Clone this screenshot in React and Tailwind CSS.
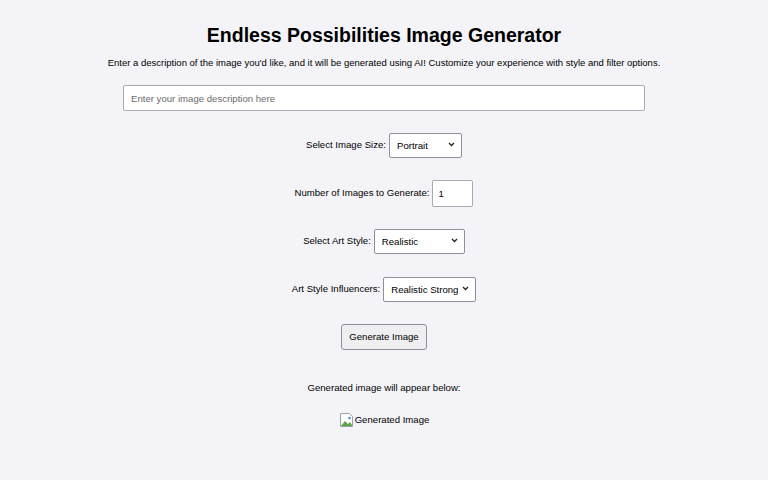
import { useState } from "react";

function Field({ label, children }) {
  return (
    <div className="flex items-center justify-center gap-[3px] h-[48px]">
      <label className="text-[9.6px] text-black">{label}</label>
      {children}
    </div>
  );
}

function Select({ value, onChange, width, options }) {
  return (
    <div className={`relative ${width}`}>
      <select
        value={value}
        onChange={onChange}
        className="appearance-none w-full h-[25px] bg-white border border-[#8f8f9d] rounded-[2px] pl-[7px] pr-[16px] text-[9.6px] outline-none"
      >
        {options.map((o) => (
          <option key={o.value} value={o.value}>
            {o.label}
          </option>
        ))}
      </select>
      <svg
        width="7"
        height="5"
        viewBox="0 0 7 5"
        className="absolute right-[7px] top-[10px] pointer-events-none"
      >
        <path d="M1 1l2.5 2.5L6 1" fill="none" stroke="#222" strokeWidth="1.3" />
      </svg>
    </div>
  );
}

function BrokenImageIcon() {
  return (
    <svg width="16" height="16" viewBox="0 0 16 16" className="inline-block">
      <path d="M1.5 1.5h9l3 3v10h-12z" fill="#fff" stroke="#9aa0a6" />
      <path d="M2 14l4-5 3 3 2-2 2.5 4z" fill="#5aa646" />
      <circle cx="10.5" cy="6" r="1.3" fill="#4a8fd9" />
    </svg>
  );
}

export default function App() {
  const [prompt, setPrompt] = useState("");
  const [size, setSize] = useState("portrait");
  const [count, setCount] = useState(1);
  const [style, setStyle] = useState("realistic");
  const [influencer, setInfluencer] = useState("realistic-strong");

  return (
    <div className="min-h-[480px] bg-[#f4f4f8] text-black font-['Liberation_Sans',Arial,sans-serif]">
      <div className="flex flex-col items-center pt-[22px]">
        <h1 className="text-[19.5px] font-bold leading-[26px]">Endless Possibilities Image Generator</h1>
        <p className="mt-[8px] text-[9.5px] leading-[14px]">
          Enter a description of the image you'd like, and it will be generated using AI! Customize your experience with style and filter options.
        </p>
        <input
          type="text"
          value={prompt}
          onChange={(e) => setPrompt(e.target.value)}
          placeholder="Enter your image description here"
          className="mt-[15px] w-[522px] h-[26px] bg-white border border-[#a9a9b0] rounded-[2px] px-[7px] text-[9.6px] placeholder:text-[#6b6b6b] outline-none"
        />

        <div className="mt-[10px] flex flex-col">
          <Field label="Select Image Size:">
            <Select
              value={size}
              onChange={(e) => setSize(e.target.value)}
              width="w-[73px]"
              options={[
                { value: "portrait", label: "Portrait" },
                { value: "landscape", label: "Landscape" },
                { value: "square", label: "Square" },
              ]}
            />
          </Field>
          <Field label="Number of Images to Generate:">
            <input
              type="number"
              min="1"
              value={count}
              onChange={(e) => setCount(e.target.value)}
              className="w-[41px] h-[27px] bg-white border border-[#a9a9b0] rounded-[2px] px-[5px] text-[9.6px] outline-none [appearance:textfield]"
            />
          </Field>
          <Field label="Select Art Style:">
            <Select
              value={style}
              onChange={(e) => setStyle(e.target.value)}
              width="w-[91px]"
              options={[
                { value: "realistic", label: "Realistic" },
                { value: "cartoon", label: "Cartoon" },
                { value: "anime", label: "Anime" },
              ]}
            />
          </Field>
          <Field label="Art Style Influencers:">
            <Select
              value={influencer}
              onChange={(e) => setInfluencer(e.target.value)}
              width="w-[93px]"
              options={[
                { value: "realistic-strong", label: "Realistic Strong" },
                { value: "realistic-light", label: "Realistic Light" },
              ]}
            />
          </Field>
          <div className="flex justify-center h-[48px] items-center">
            <button className="h-[26px] px-[7px] bg-[#efeff1] border border-[#8f8f9d] rounded-[3px] text-[9.6px]">
              Generate Image
            </button>
          </div>
        </div>

        <p className="mt-[20px] text-[9.6px] leading-[14px]">Generated image will appear below:</p>
        <div className="mt-[17px] flex items-center text-[9.6px] leading-[16px]">
          <BrokenImageIcon />
          <span>Generated Image</span>
        </div>
      </div>
    </div>
  );
}
